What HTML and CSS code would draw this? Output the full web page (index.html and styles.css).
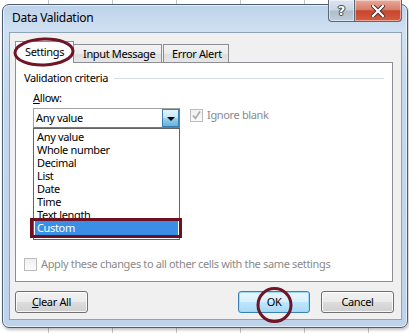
FILE: index.html
```html
<!DOCTYPE html>
<html>
<head>
<meta charset="utf-8">
<link rel="stylesheet" href="styles.css">
</head>
<body>
<div class="desk">
  <div class="window">
    <div class="titlebar"><span class="title">Data Validation</span></div>
    <div class="caption">
      <div class="cbtn help">?</div>
      <div class="cbtn close">
        <svg width="14" height="12" viewBox="0 0 14 12"><path d="M2 1 L12 11 M12 1 L2 11" stroke="#3a2a2a" stroke-width="4" stroke-linecap="square"/><path d="M2 1 L12 11 M12 1 L2 11" stroke="#fff" stroke-width="2.2" stroke-linecap="square"/></svg>
      </div>
    </div>
    <div class="client">
      <div class="tabs">
        <div class="tab sel">Settings</div>
        <div class="tab">Input Message</div>
        <div class="tab">Error Alert</div>
      </div>
      <div class="panel">
        <div class="group"><span>Validation criteria</span><i class="rule"></i></div>
        <div class="row">
          <div class="allow">
            <div class="lbl"><u>A</u>llow:</div>
            <div class="combo">
              <span>Any value</span>
              <div class="drop"><i class="tri"></i></div>
              <ul class="list">
                <li>Any value</li>
                <li>Whole number</li>
                <li>Decimal</li>
                <li>List</li>
                <li>Date</li>
                <li>Time</li>
                <li>Text length</li>
                <li class="hl">Custom</li>
              </ul>
            </div>
          </div>
          <div class="chk dis">
            <span class="box"><svg width="11" height="11" viewBox="0 0 11 11"><path d="M2 5.5 L4.3 8.5 L9 1.5" fill="none" stroke="#a8a8a8" stroke-width="1.6"/></svg></span>
            <span>Ignore blank</span>
          </div>
        </div>
        <div class="chk dis apply">
          <span class="box"></span>
          <span>Apply these changes to all other cells with the same settings</span>
        </div>
      </div>
      <div class="buttons">
        <div class="btn"><u>C</u>lear All</div>
        <div class="spacer"></div>
        <div class="btn def">OK</div>
        <div class="btn">Cancel</div>
      </div>
    </div>
  </div>
  <svg class="annot" width="409" height="333" viewBox="0 0 409 333">
    <ellipse cx="44" cy="52" rx="29" ry="13" transform="rotate(-2 44 52)" fill="none" stroke="#6e1526" stroke-width="3"/>
    <circle cx="274.5" cy="305" r="16.5" fill="none" stroke="#6e1526" stroke-width="3"/>
  </svg>
</div>
</body>
</html>
```
FILE: styles.css
```css
* { box-sizing: border-box; }
html, body { margin: 0; padding: 0; }
body {
  width: 409px;
  height: 333px;
  overflow: hidden;
  font-family: "Noto Sans", "Open Sans", sans-serif;
  font-size: 11px;
  letter-spacing: -0.35px;
  color: #000;
  background-color: #fff;
  background-image: linear-gradient(90deg, #c6c6c6 1px, transparent 1px);
  background-size: 64px 100%;
  background-position: 48px 0;
}
.desk {
  position: relative;
  width: 409px;
  height: 333px;
  padding: 4px 0 0 2px;
}
.window {
  position: relative;
  width: 406px;
  height: 324px;
  border: 1px solid #4d5d70;
  border-radius: 7px;
  background: linear-gradient(180deg, #bdd3ea 0%, #cfe0f1 8%, #c3d8ee 30%, #bcd3eb 100%);
  box-shadow: inset 0 0 0 1px rgba(255,255,255,0.6), 1px 2px 3px rgba(0,0,0,0.25);
  padding: 0 5px 7px 6px;
  display: flex;
  flex-direction: column;
}
.titlebar {
  height: 27px;
  display: flex;
  align-items: center;
  padding-left: 3px;
  padding-bottom: 2px;
}
.title {
  font-size: 12px;
  letter-spacing: -0.3px;
  color: #000;
}
.caption {
  position: absolute;
  top: -5px;
  right: 5px;
  display: flex;
}
.cbtn {
  height: 22px;
  border: 1px solid #5b6878;
  border-top: none;
  display: flex;
  align-items: center;
  justify-content: center;
  box-shadow: inset 0 0 0 1px rgba(255,255,255,0.45);
}
.help {
  width: 26px;
  border-radius: 0 0 0 4px;
  border-right: none;
  background: linear-gradient(180deg, #dde6ef 0%, #c9d5e2 48%, #aebccc 52%, #bfcedd 100%);
  color: #fff;
  font-family: "DejaVu Sans", sans-serif;
  font-weight: bold;
  font-size: 13px;
  letter-spacing: 0;
  text-shadow: 0 0 1px #333, 0 0 1px #333, 1px 0 0 #555, -1px 0 0 #555, 0 1px 0 #555, 0 -1px 0 #555;
}
.close {
  width: 48px;
  border-radius: 0 0 4px 0;
  background: linear-gradient(180deg, #e9a99a 0%, #d8806c 45%, #c8452f 52%, #d45d3f 100%);
}
.client {
  flex: 1;
  background: #f0f0f0;
  border: 1px solid #8ea4bb;
  padding: 9px 8px 6px 5px;
  display: flex;
  flex-direction: column;
}
.tabs {
  display: flex;
  align-items: flex-end;
  height: 20px;
  position: relative;
  z-index: 2;
}
.tab {
  height: 18px;
  padding: 0 7px;
  border: 1px solid #8c8e94;
  border-bottom: none;
  background: linear-gradient(180deg, #f3f3f3 0%, #ebebeb 50%, #dedede 51%, #e6e6e6 100%);
  display: flex;
  align-items: center;
  margin-left: -1px;
  line-height: 14px;
  white-space: nowrap;
}
.tab.sel {
  height: 22px;
  margin-bottom: -1px;
  margin-left: 0;
  background: #fff;
  padding: 0 8px 2px 9px;
  width: 59px;
}
.tab:nth-child(2) { width: 88px; border-left: none; margin-left: 0; padding-left: 9px; }
.tab:nth-child(3) { width: 66px; margin-left: 1px; padding-left: 8px; }
.panel {
  height: 220px;
  border: 1px solid #8c8e94;
  background: #fff;
  padding: 8px 8px 10px 8px;
  display: flex;
  flex-direction: column;
  position: relative;
}
.group {
  display: flex;
  align-items: center;
  height: 14px;
  line-height: 14px;
}
.rule {
  flex: 1;
  height: 1px;
  background: #d5dfe5;
  margin: 1px 0 0 6px;
}
.row {
  display: flex;
  align-items: flex-start;
  margin-top: 6px;
  padding-left: 9px;
}
.allow {
  width: 147px;
}
.lbl {
  height: 14px;
  line-height: 14px;
  margin-bottom: 3px;
}
.combo {
  position: relative;
  height: 20px;
  border: 1px solid #7a7a7a;
  border-color: #a3a3a3 #7a7a7a #7a7a7a #a3a3a3;
  background: #fff;
  display: flex;
  align-items: center;
  padding-left: 2px;
}
.combo span { flex: 1; line-height: 14px; }
.drop {
  width: 17px;
  height: 18px;
  border: 1px solid #3c7fb1;
  background: linear-gradient(180deg, #e5f4fc 0%, #c4e5f6 48%, #98d1ef 52%, #68b3db 100%);
  display: flex;
  align-items: center;
  justify-content: center;
}
.tri {
  width: 0; height: 0;
  border-left: 4px solid transparent;
  border-right: 4px solid transparent;
  border-top: 4px solid #000;
  margin-top: 1px;
}
.list {
  position: absolute;
  left: -1px;
  right: -1px;
  top: 19px;
  margin: 0;
  padding: 1px 1px 4px 1px;
  list-style: none;
  border: 1px solid #646464;
  background: #fff;
  z-index: 5;
}
.list li {
  height: 13px;
  line-height: 13px;
  padding-left: 2px;
  white-space: nowrap;
  position: relative;
}
.list li.hl {
  height: 14px;
  background: #3a8ee6;
  color: #fff;
}
.list li.hl::after {
  content: "";
  position: absolute;
  left: -5px;
  right: -4px;
  top: -3px;
  bottom: -3px;
  border: 3px solid #6e1020;
}
.chk {
  display: flex;
  align-items: center;
  gap: 4px;
  line-height: 14px;
}
.row .chk { margin-left: 10px; margin-top: 17px; }
.chk.dis { color: #8a8a8a; }
.box {
  width: 13px;
  height: 13px;
  border: 1px solid #bcbcbc;
  background: linear-gradient(180deg, #f0f0f0, #fbfbfb);
  display: flex;
  align-items: center;
  justify-content: center;
}
.apply { margin-top: auto; color: #6f6f6f; }
.buttons {
  display: flex;
  margin-top: 9px;
  height: 22px;
  gap: 11px;
}
.spacer { flex: 1; }
.btn {
  width: 73px;
  height: 22px;
  border: 1px solid #707070;
  border-radius: 3px;
  background: linear-gradient(180deg, #f2f2f2 0%, #ebebeb 48%, #dddddd 52%, #cfcfcf 100%);
  box-shadow: inset 0 0 0 1px rgba(255,255,255,0.8);
  display: flex;
  align-items: center;
  justify-content: center;
  line-height: 14px;
}
.btn.def {
  width: 72px;
  border-color: #3c7fb1;
  background: linear-gradient(180deg, #eaf6fd 0%, #d9f0fc 48%, #bee6fd 52%, #a7d9f5 100%);
  box-shadow: inset 0 0 0 1px #9ddaf8;
}
.buttons .btn:last-child { margin-right: -1px; }
.annot {
  position: absolute;
  left: 0;
  top: 0;
  pointer-events: none;
  z-index: 10;
}
```
